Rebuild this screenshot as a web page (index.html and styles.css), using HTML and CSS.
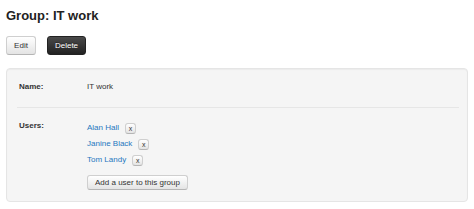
FILE: index.html
```html
<!DOCTYPE html>
<html lang="en">
<head>
    <meta charset="UTF-8">
    <title>Group: IT work</title>
    <link rel="stylesheet" href="styles.css">
</head>
<body>
    <h1 class="title">Group: IT work</h1>

    <div class="actions">
        <button class="btn">Edit</button>
        <button class="btn btn-dark">Delete</button>
    </div>

    <div class="panel">
        <div class="row">
            <div class="label">Name:</div>
            <div class="value">IT work</div>
        </div>
        <div class="row row-last">
            <div class="label">Users:</div>
            <div class="value">
                <ul class="users">
                    <li><a href="#">Alan Hall</a> <button class="btn btn-x">x</button></li>
                    <li><a href="#">Janine Black</a> <button class="btn btn-x">x</button></li>
                    <li><a href="#">Tom Landy</a> <button class="btn btn-x">x</button></li>
                </ul>
                <button class="btn btn-add">Add a user to this group</button>
            </div>
        </div>
    </div>
</body>
</html>
```

FILE: styles.css
```css
body {
    margin: 0;
    padding: 8px 6px;
    font-family: 'Liberation Sans', Arial, sans-serif;
    color: #333;
    background: #fff;
}

.title {
    margin: 0;
    font-size: 13px;
    line-height: 16px;
    font-weight: bold;
    color: #222;
}

.actions {
    display: flex;
    gap: 11px;
    margin-top: 12px;
}

.btn {
    font-family: inherit;
    font-size: 8px;
    color: #333;
    background: linear-gradient(#ffffff, #e4e4e4);
    border: 1px solid #cfcfcf;
    border-bottom-color: #b5b5b5;
    border-radius: 3px;
    padding: 0;
    cursor: pointer;
}

.actions .btn {
    height: 19px;
    width: 30px;
}

.actions .btn-dark {
    width: 39px;
    color: #fff;
    background: linear-gradient(#4a4a4a, #222);
    border-color: #222;
    text-shadow: 0 -1px 0 rgba(0, 0, 0, 0.4);
}

.panel {
    margin-top: 13px;
    background: #f5f5f5;
    border: 1px solid #e5e5e5;
    border-radius: 4px;
    box-shadow: inset 0 1px 1px rgba(0, 0, 0, 0.04);
    padding: 0 8px 0 10px;
    height: 132px;
}

.row {
    display: flex;
    padding: 12px 0;
    border-bottom: 1px solid #e6e6e6;
    font-size: 8px;
    line-height: 12px;
}

.row:first-child {
    padding: 12px 0 14px;
}

.row-last {
    border-bottom: none;
}

.label {
    width: 68px;
    padding-left: 2px;
    font-weight: bold;
    color: #333;
}

.value {
    color: #333;
}

.users {
    list-style: none;
    margin: 0;
    padding: 0;
}

.users li {
    display: flex;
    align-items: center;
    gap: 6px;
    height: 16px;
}

.users a {
    color: #1f77c0;
    text-decoration: none;
}

.btn-x {
    width: 11px;
    height: 11px;
    font-size: 7px;
    line-height: 9px;
}

.btn-add {
    margin-top: 7px;
    width: 101px;
    height: 15px;
    font-size: 8px;
}
```
